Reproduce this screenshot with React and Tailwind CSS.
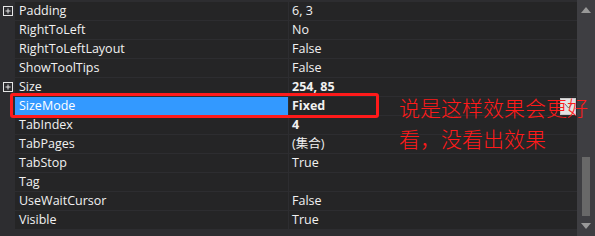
const ROWS = [
  { name: 'Padding', value: '6, 3', expand: true },
  { name: 'RightToLeft', value: 'No' },
  { name: 'RightToLeftLayout', value: 'False' },
  { name: 'ShowToolTips', value: 'False' },
  { name: 'Size', value: '254, 85', expand: true, bold: true },
  { name: 'SizeMode', value: 'Fixed', bold: true, selected: true },
  { name: 'TabIndex', value: '4', bold: true },
  { name: 'TabPages', value: '(集合)' },
  { name: 'TabStop', value: 'True' },
  { name: 'Tag', value: '' },
  { name: 'UseWaitCursor', value: 'False' },
  { name: 'Visible', value: 'True' },
]

function PlusBox() {
  return (
    <svg width="10" height="10" viewBox="0 0 10 10" className="block">
      <rect x="0.5" y="0.5" width="9" height="9" fill="none" stroke="#e6e6e6" strokeWidth="1" />
      <path d="M2.5 5h5M5 2.5v5" stroke="#e6e6e6" strokeWidth="1" />
    </svg>
  )
}

function Row({ row }) {
  return (
    <div className="flex h-[18px] shrink-0">
      <div className="w-[15px] flex items-center pl-[3px]">
        {row.expand && <PlusBox />}
      </div>
      <div
        className={`w-[273px] flex items-center pl-[4px] ${row.selected ? 'bg-[#3399ff] text-white' : 'bg-[#252526] text-[#f1f1f1]'}`}
      >
        {row.name}
      </div>
      <div className="w-px" />
      <div className={`flex-1 flex items-center pl-[3px] bg-[#252526] text-[#f1f1f1] ${row.bold ? 'font-bold' : ''}`}>
        <span className="flex-1">{row.value}</span>
        {row.selected && (
          <div className="w-[16px] h-[17px] mr-px bg-[#e3e3e3] border border-[#c8c8c8] flex items-center justify-center">
            <svg width="9" height="6" viewBox="0 0 9 6">
              <path d="M0.5 0.5L4.5 5L8.5 0.5" fill="none" stroke="#707070" strokeWidth="1" />
            </svg>
          </div>
        )}
      </div>
    </div>
  )
}

export default function App() {
  return (
    <div
      className="relative w-[595px] h-[236px] bg-[#2d2d30] overflow-hidden flex text-[12.5px] leading-none"
      style={{ fontFamily: '"Open Sans", "Noto Sans CJK SC", sans-serif' }}
    >
      <div className="flex-1 flex flex-col gap-px pt-[2px]">
        {ROWS.map(r => <Row key={r.name} row={r} />)}
      </div>

      {/* scrollbar */}
      <div className="w-[18px] bg-[#3e3e42] flex flex-col items-center">
        <svg width="10" height="6" viewBox="0 0 10 6" className="mt-[7px]">
          <path d="M0 6L5 0L10 6Z" fill="#999999" />
        </svg>
        <div className="flex-1" />
        <div className="w-[8px] h-[59px] bg-[#686868]" />
        <svg width="10" height="6" viewBox="0 0 10 6" className="mt-[7px] mb-[7px]">
          <path d="M0 0L5 6L10 0Z" fill="#999999" />
        </svg>
      </div>

      {/* annotation overlay */}
      <div className="absolute left-[10px] top-[93px] w-[369px] h-[25px] border-[3px] border-[#ff1a1a] rounded-[3px]" />
      <div
        className="absolute left-[399px] top-[92px] text-[21px] leading-[31px] text-[#ff1a1a] font-light whitespace-nowrap"
        style={{ fontFamily: '"Noto Sans CJK SC", sans-serif' }}
      >
        说是这样效果会更好<br />看，没看出效果
      </div>
    </div>
  )
}
